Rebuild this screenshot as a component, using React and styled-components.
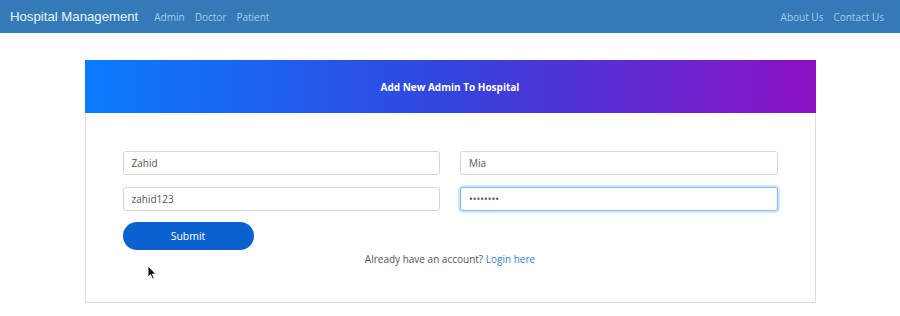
import React from 'react';
import styled, { createGlobalStyle } from 'styled-components';

const GlobalStyle = createGlobalStyle`
  body {
    margin: 0;
    background: #ffffff;
    font-family: "Open Sans", "Noto Sans", sans-serif;
  }
`;

const NavBar = styled.nav`
  height: 33px;
  background: #337ab7;
  display: flex;
  align-items: center;
  padding: 0 16px 0 10px;
`;

const Brand = styled.span`
  font-family: "Liberation Sans", Arial, sans-serif;
  font-size: 13.2px;
  color: #eef4fb;
  margin-right: 16px;
`;

const NavLinks = styled.div`
  display: flex;
  gap: 10px;
  margin-left: ${p => (p.right ? 'auto' : '0')};
`;

const NavLink = styled.a`
  font-size: 10px;
  color: #a9cbea;
  text-decoration: none;
`;

const Card = styled.div`
  box-sizing: border-box;
  width: 731px;
  margin: 27px auto 0;
  border: 1px solid #dedede;
  border-top: none;
`;

const CardHeader = styled.div`
  height: 53px;
  margin: 0 -1px;
  background: linear-gradient(90deg, #0a7cff 0%, #3344de 50%, #8c10c4 100%);
  display: flex;
  align-items: center;
  justify-content: center;
  color: #ffffff;
  font-size: 10px;
  font-weight: 700;
`;

const CardBody = styled.div`
  padding: 38px 37px 36px 37px;
`;

const Grid = styled.div`
  display: grid;
  grid-template-columns: 1fr 1fr;
  column-gap: 20px;
  row-gap: 12px;
`;

const Input = styled.input`
  box-sizing: border-box;
  height: 24px;
  width: 100%;
  border: 1px solid ${p => (p.focused ? '#84b9ef' : '#d6d6d6')};
  border-radius: 3px;
  box-shadow: ${p => (p.focused ? '0 0 0 2px rgba(80, 150, 230, 0.25)' : 'none')};
  padding: 0 8px;
  font-family: "Open Sans", "Noto Sans", sans-serif;
  font-size: 10px;
  color: #555;
  outline: none;
  background: #fff;
`;

const SubmitButton = styled.button`
  margin-top: 11px;
  width: 131px;
  height: 28px;
  border: none;
  border-radius: 14px;
  background: #0b62cf;
  color: #ffffff;
  font-family: "Open Sans", "Noto Sans", sans-serif;
  font-size: 10.5px;
  display: block;
`;

const Footer = styled.p`
  margin: 2px 0 0;
  text-align: center;
  font-size: 10px;
  color: #555;
`;

const LoginLink = styled.a`
  color: #3a7fd6;
  text-decoration: none;
`;

const Cursor = styled.svg`
  position: absolute;
  left: 147px;
  top: 265px;
`;

export default function App() {
  return (
    <>
      <GlobalStyle />
      <NavBar>
        <Brand>Hospital Management</Brand>
        <NavLinks>
          <NavLink>Admin</NavLink>
          <NavLink>Doctor</NavLink>
          <NavLink>Patient</NavLink>
        </NavLinks>
        <NavLinks right>
          <NavLink>About Us</NavLink>
          <NavLink>Contact Us</NavLink>
        </NavLinks>
      </NavBar>
      <Card>
        <CardHeader>Add New Admin To Hospital</CardHeader>
        <CardBody>
          <Grid>
            <Input defaultValue="Zahid" />
            <Input defaultValue="Mia" />
            <Input defaultValue="zahid123" />
            <Input type="password" defaultValue="password" focused />
          </Grid>
          <SubmitButton>Submit</SubmitButton>
          <Footer>
            Already have an account? <LoginLink>Login here</LoginLink>
          </Footer>
        </CardBody>
      </Card>
      <Cursor width="10" height="15" viewBox="0 0 10 15">
        <path d="M1 1 L1 12 L3.6 9.6 L5.6 14 L7.2 13.3 L5.3 9 L8.8 9 Z" fill="#111" stroke="#fff" strokeWidth="0.8" />
      </Cursor>
    </>
  );
}
